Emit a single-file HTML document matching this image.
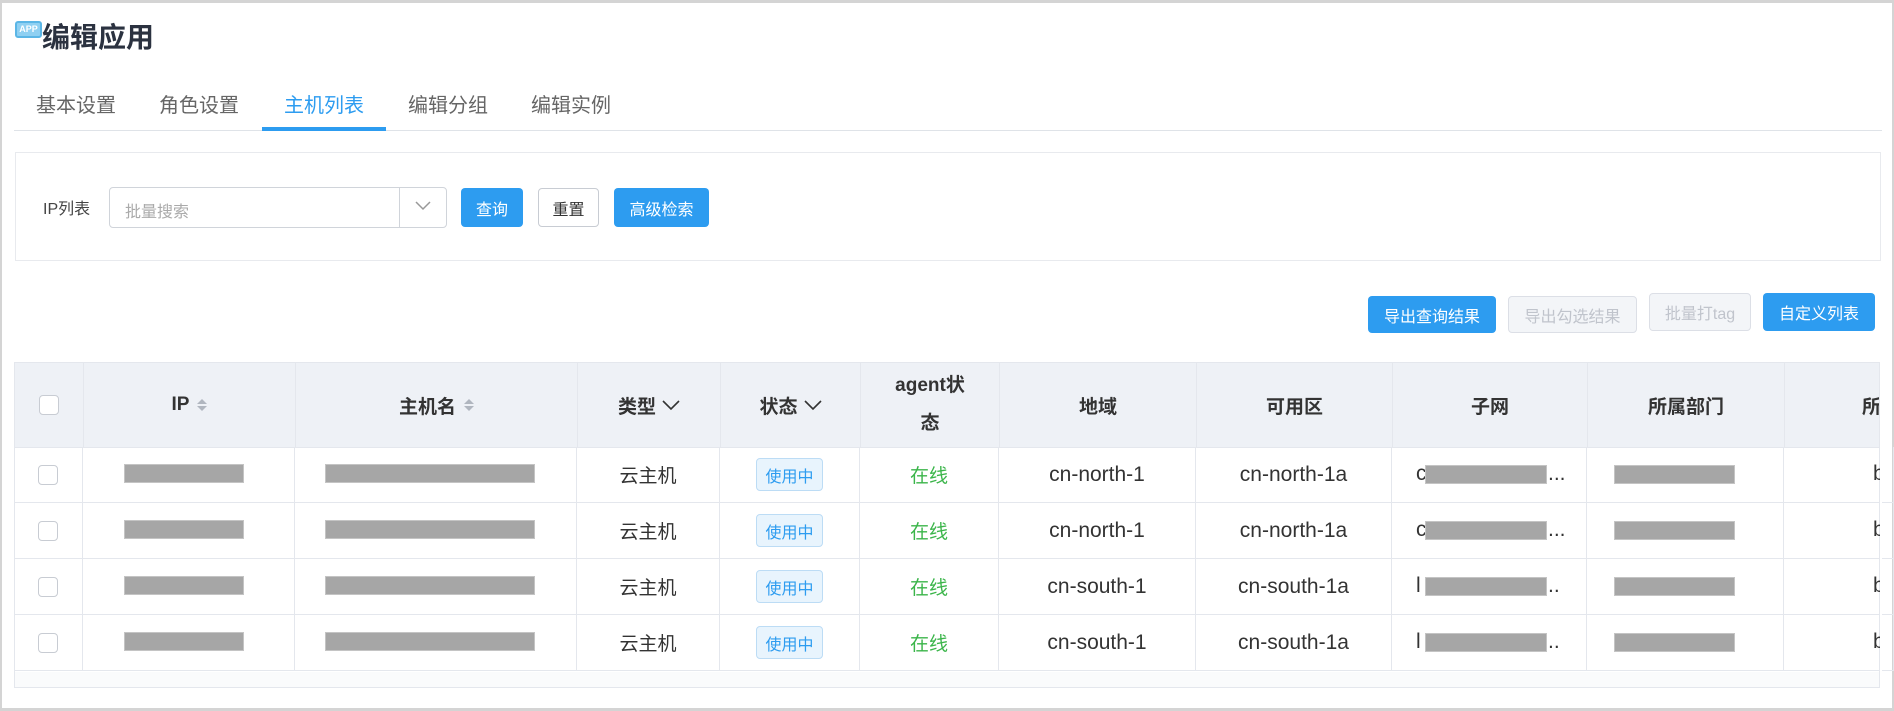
<!DOCTYPE html>
<html><head><meta charset="utf-8"><style>
*{box-sizing:border-box;margin:0;padding:0}
body{width:1894px;height:711px;background:#fff;font-family:"Liberation Sans","Noto Sans CJK SC",sans-serif;position:relative;overflow:hidden;color:#333}
.frame{position:absolute;left:0;top:0;width:1894px;height:711px;border:2px solid #d4d4d4;border-top-width:3px;border-bottom-width:3px}
.a{position:absolute}
.btn{position:absolute;border-radius:4px;font-size:16px;display:flex;align-items:center;justify-content:center}
.blue{background:#2d9cf0;color:#fff}
.dis{background:#f3f5f8;color:#c0c4cc;border:1px solid #dcdfe6}
.tbl{position:absolute;left:14px;top:362px;width:1866px;height:326px;overflow:hidden;border:1px solid #e4e7ed}
.c{position:absolute;display:flex;align-items:center;justify-content:center;font-size:19px;color:#333;border-right:1px solid #e4e7ed;border-bottom:1px solid #e4e7ed;overflow:hidden}
.h{background:#eef1f6;font-weight:bold;color:#333;height:85px;top:0}
.cb{width:20px;height:20px;border:1px solid #c8ccd3;border-radius:4px;background:#fff}
.red{position:absolute;background:#a6a6a6;height:19px;border:1px solid #c4c4c4}
.tag{width:67px;height:33px;background:#e8f4fd;border:1px solid #bcdcf5;border-radius:4px;color:#2d9cf0;font-size:16px;display:flex;align-items:center;justify-content:center}
.g{color:#3bb54a}
.l{font-size:21px}
.sort{display:inline-flex;flex-direction:column;margin-left:8px;gap:2px}
.sort i{width:0;height:0;border-left:5px solid transparent;border-right:5px solid transparent}
</style></head><body>
<div class="frame"></div>
<div class="a" style="left:15px;top:21px;width:27px;height:17px;border:2px solid #5bb6e6;border-radius:3px;background:#8fd0f2;color:#fff;font-size:9px;font-weight:bold;text-align:center;line-height:13px">APP</div>
<div class="a" style="left:42px;top:16px;font-size:28px;font-weight:bold;color:#2b3240">编辑应用</div>

<div class="a" style="left:36px;top:89px;font-size:20px;color:#666">基本设置</div>
<div class="a" style="left:159px;top:89px;font-size:20px;color:#666">角色设置</div>
<div class="a" style="left:284px;top:89px;font-size:20px;color:#2d9cf0">主机列表</div>
<div class="a" style="left:408px;top:89px;font-size:20px;color:#666">编辑分组</div>
<div class="a" style="left:531px;top:89px;font-size:20px;color:#666">编辑实例</div>
<div class="a" style="left:14px;top:130px;width:1868px;height:1px;background:#dfe3e8"></div>
<div class="a" style="left:262px;top:127px;width:124px;height:4px;background:#2d9cf0"></div>

<div class="a" style="left:15px;top:152px;width:1866px;height:109px;border:1px solid #e8eaee"></div>
<div class="a" style="left:43px;top:195px;font-size:16px;color:#444">IP列表</div>
<div class="a" style="left:109px;top:187px;width:338px;height:41px;border:1px solid #d0d4da;border-radius:4px"></div>
<div class="a" style="left:399px;top:187px;width:1px;height:41px;background:#d0d4da"></div>
<div class="a" style="left:125px;top:198px;font-size:16px;color:#aaa">批量搜索</div>
<svg class="a" style="left:414px;top:200px" width="18" height="12"><path d="M2 2l7 7 7-7" stroke="#999" stroke-width="1.5" fill="none"/></svg>
<div class="btn blue" style="left:461px;top:188px;width:62px;height:39px">查询</div>
<div class="btn" style="left:538px;top:188px;width:61px;height:39px;border:1px solid #c8ccd3;color:#333">重置</div>
<div class="btn blue" style="left:614px;top:188px;width:95px;height:39px">高级检索</div>

<div class="btn blue" style="left:1368px;top:296px;width:128px;height:37px">导出查询结果</div>
<div class="btn dis" style="left:1508px;top:296px;width:129px;height:37px">导出勾选结果</div>
<div class="btn dis" style="left:1649px;top:293px;width:102px;height:38px">批量打tag</div>
<div class="btn blue" style="left:1763px;top:293px;width:112px;height:38px">自定义列表</div>

<div class="tbl">
<div class="c h" style="left:0;width:69px"><div class="cb"></div></div>
<div class="c h" style="left:69px;width:212px">IP<span class="sort"><i style="border-bottom:5px solid #b0b6bf"></i><i style="border-top:5px solid #b0b6bf"></i></span></div>
<div class="c h" style="left:281px;width:282px">主机名<span class="sort"><i style="border-bottom:5px solid #b0b6bf"></i><i style="border-top:5px solid #b0b6bf"></i></span></div>
<div class="c h" style="left:563px;width:143px">类型<svg style="margin-left:6px" width="18" height="12"><path d="M1 2l8 8 8-8" stroke="#333" stroke-width="1.6" fill="none"/></svg></div>
<div class="c h" style="left:706px;width:140px">状态<svg style="margin-left:6px" width="18" height="12"><path d="M1 2l8 8 8-8" stroke="#333" stroke-width="1.6" fill="none"/></svg></div>
<div class="c h" style="left:846px;width:139px;line-height:38px;text-align:center">agent状<br>态</div>
<div class="c h" style="left:985px;width:197px">地域</div>
<div class="c h" style="left:1182px;width:196px">可用区</div>
<div class="c h" style="left:1378px;width:195px">子网</div>
<div class="c h" style="left:1573px;width:197px">所属部门</div>
<div class="c h" style="left:1770px;width:120px;justify-content:flex-start;padding-left:77px">所属</div>
<div class="a" style="left:0;top:309px;width:1866px;height:17px;background:#fafbfc"></div>
</div>
<div id="rows"></div>
<script>
var d=[["cn-north-1","cn-north-1a","c"],["cn-north-1","cn-north-1a","c"],["cn-south-1","cn-south-1a","l"],["cn-south-1","cn-south-1a","l"]];
var h='';
d.forEach(function(r,i){
var t=85+i*56,y=362+t;
var cols=[[0,69],[69,212],[281,282],[563,143],[706,140],[846,139],[985,197],[1182,196],[1378,195],[1573,197],[1770,110]];
var content=['<div class="cb"></div>','','','云主机','<div class="tag">使用中</div>','<span class="g">在线</span>','<span class="l">'+r[0]+'</span>','<span class="l">'+r[1]+'</span>','','',''];
cols.forEach(function(c,j){h+='<div class="c" style="left:'+(14+c[0])+'px;top:'+y+'px;width:'+c[1]+'px;height:56px">'+content[j]+'</div>';});
h+='<div class="red" style="left:124px;top:'+(y+17)+'px;width:120px"></div>';
h+='<div class="red" style="left:325px;top:'+(y+17)+'px;width:210px"></div>';
h+='<div class="a" style="left:1416px;top:'+(y+15)+'px;font-size:21px">'+r[2]+'</div>';
h+='<div class="red" style="left:1425px;top:'+(y+18)+'px;width:122px"></div>';
h+='<div class="a" style="left:1548px;top:'+(y+15)+'px;font-size:21px">'+(i<2?'...':'..')+'</div>';
h+='<div class="red" style="left:1614px;top:'+(y+18)+'px;width:121px"></div>';
h+='<div class="a" style="left:1873px;top:'+(y+15)+'px;font-size:21px;width:7px;overflow:hidden">b</div>';
});
document.getElementById('rows').innerHTML=h;
</script>
<div class="a" style="left:1880px;top:362px;width:2px;height:326px;background:#fff"></div>
</body></html>
